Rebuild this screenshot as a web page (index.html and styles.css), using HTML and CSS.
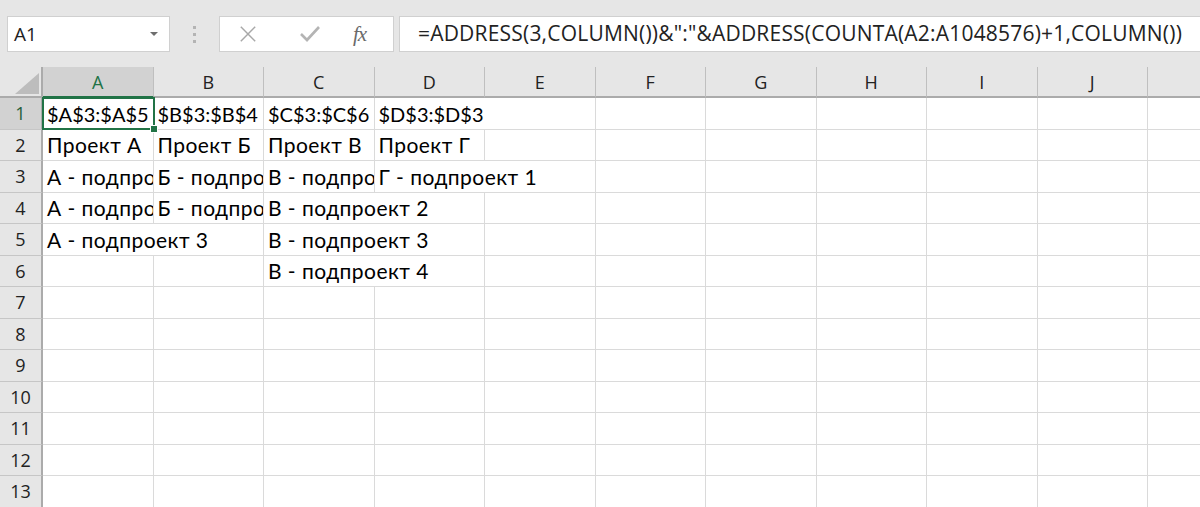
FILE: index.html
```html
<!DOCTYPE html>
<html>
    <head>
        <link rel="stylesheet" href="styles.css">
    </head>
    <body>
        <div class="toolbar">
            <div class="namebox">
                <span>A1</span>
                <i class="arrow"></i>
            </div>
            <div class="grip"><i></i><i></i><i></i></div>
            <div class="fxbox">
                <svg class="ico" width="20" height="20" viewBox="0 0 20 20">
                    <path d="M2 2 L18 18 M18 2 L2 18" stroke="#a8a8a8" stroke-width="1.6" fill="none"/>
                </svg>
                <svg class="ico" width="22" height="20" viewBox="0 0 22 20">
                    <path d="M2 10 L8 16 L20 3" stroke="#b4b4b4" stroke-width="2.6" fill="none"/>
                </svg>
                <span class="fx">fx</span>
            </div>
            <div class="formula">=ADDRESS(3,COLUMN())&amp;":"&amp;ADDRESS(COUNTA(A2:A1048576)+1,COLUMN())</div>
        </div>
        <div class="sheet">
            <table>
                <colgroup>
                    <col class="rh">
                    <col class="c"><col class="c"><col class="c"><col class="c"><col class="c"><col class="c">
                    <col class="c"><col class="c"><col class="c"><col class="c"><col class="c">
                </colgroup>
                <thead>
                    <tr>
                        <th class="corner"><i></i></th>
                        <th class="on">A</th><th>B</th><th>C</th><th>D</th><th>E</th><th>F</th>
                        <th>G</th><th>H</th><th>I</th><th>J</th><th></th>
                    </tr>
                </thead>
                <tbody>
                    <tr class="refs">
                        <th class="on">1</th>
                        <td class="sel">$A$3:$A$5</td><td>$B$3:$B$4</td><td>$C$3:$C$6</td><td colspan="2">$D$3:$D$3</td>
                        <td></td><td></td><td></td><td></td><td></td><td></td>
                    </tr>
                    <tr>
                        <th>2</th>
                        <td>Проект А</td><td>Проект Б</td><td>Проект В</td><td>Проект Г</td>
                        <td></td><td></td><td></td><td></td><td></td><td></td><td></td>
                    </tr>
                    <tr>
                        <th>3</th>
                        <td>А - подпроект 1</td><td>Б - подпроект 1</td><td>В - подпроект 1</td><td colspan="2">Г - подпроект 1</td>
                        <td></td><td></td><td></td><td></td><td></td><td></td>
                    </tr>
                    <tr>
                        <th>4</th>
                        <td>А - подпроект 2</td><td>Б - подпроект 2</td><td colspan="2">В - подпроект 2</td>
                        <td></td><td></td><td></td><td></td><td></td><td></td><td></td>
                    </tr>
                    <tr>
                        <th>5</th>
                        <td colspan="2">А - подпроект 3</td><td colspan="2">В - подпроект 3</td>
                        <td></td><td></td><td></td><td></td><td></td><td></td><td></td>
                    </tr>
                    <tr>
                        <th>6</th>
                        <td></td><td></td><td colspan="2">В - подпроект 4</td>
                        <td></td><td></td><td></td><td></td><td></td><td></td><td></td>
                    </tr>
                    <tr><th>7</th><td></td><td></td><td></td><td></td><td></td><td></td><td></td><td></td><td></td><td></td><td></td></tr>
                    <tr><th>8</th><td></td><td></td><td></td><td></td><td></td><td></td><td></td><td></td><td></td><td></td><td></td></tr>
                    <tr><th>9</th><td></td><td></td><td></td><td></td><td></td><td></td><td></td><td></td><td></td><td></td><td></td></tr>
                    <tr><th>10</th><td></td><td></td><td></td><td></td><td></td><td></td><td></td><td></td><td></td><td></td><td></td></tr>
                    <tr><th>11</th><td></td><td></td><td></td><td></td><td></td><td></td><td></td><td></td><td></td><td></td><td></td></tr>
                    <tr><th>12</th><td></td><td></td><td></td><td></td><td></td><td></td><td></td><td></td><td></td><td></td><td></td></tr>
                    <tr><th>13</th><td></td><td></td><td></td><td></td><td></td><td></td><td></td><td></td><td></td><td></td><td></td></tr>
                </tbody>
            </table>
        </div>
    </body>
</html>
```

FILE: styles.css
```css
body{
    margin:0;
    width:1200px;
    height:507px;
    overflow:hidden;
    background:#e6e6e6;
    font-family:"Open Sans", "Noto Sans", sans-serif;
}
.toolbar{
    height:67px;
    box-sizing:border-box;
    padding-top:16px;
    display:flex;
    align-items:flex-start;
}
.namebox{
    margin-left:7px;
    width:163px;
    height:36px;
    box-sizing:border-box;
    background:#fff;
    border:1px solid #d0d0d0;
    display:flex;
    align-items:center;
    justify-content:space-between;
    padding:0 11px 0 6px;
    font-size:19px;
    color:#222;
}
.namebox .arrow{
    width:0;
    height:0;
    border-left:4px solid transparent;
    border-right:4px solid transparent;
    border-top:4px solid #6e6e6e;
}
.grip{
    width:49px;
    height:36px;
    display:flex;
    flex-direction:column;
    align-items:center;
    justify-content:center;
    gap:4px;
}
.grip i{
    width:3px;
    height:3px;
    background:#b4b4b4;
}
.fxbox{
    width:175px;
    height:36px;
    box-sizing:border-box;
    background:#fff;
    border:1px solid #d0d0d0;
    display:flex;
    align-items:center;
    padding-left:19px;
}
.fxbox .ico:first-child{
    width:18px;
    height:18px;
}
.fxbox .ico + .ico{
    margin-left:42px;
}
.fx{
    margin-left:32px;
    font-family:"Liberation Serif", serif;
    font-style:italic;
    font-size:21px;
    color:#6a6a6a;
    letter-spacing:-1px;
}
.formula{
    margin-left:5px;
    flex:1;
    height:36px;
    box-sizing:border-box;
    background:#fff;
    border:1px solid #d0d0d0;
    border-right:none;
    padding-left:18px;
    font-size:21px;
    letter-spacing:0.2px;
    line-height:33px;
    white-space:nowrap;
    color:#222;
}
.sheet{
    overflow:hidden;
}
table{
    table-layout:fixed;
    border-collapse:separate;
    border-spacing:0;
    width:1258px;
}
col.rh{
    width:43px;
}
col.c{
    width:110.5px;
}
thead th{
    height:31px;
    box-sizing:border-box;
    background:#e6e6e6;
    border-right:1px solid #bfbfbf;
    border-bottom:2px solid #ababab;
    font-weight:normal;
    font-size:18px;
    color:#222;
    padding:0;
    text-align:center;
}
thead th.on{
    background:#d2d2d2;
    color:#217346;
    border-bottom-color:#217346;
}
th.corner{
    position:relative;
    border-right:2px solid #ababab;
}
th.corner i{
    position:absolute;
    right:2px;
    bottom:2px;
    width:24px;
    height:21px;
    background:#bdbdbd;
    clip-path:polygon(100% 0, 100% 100%, 0 100%);
}
tbody th{
    height:31.5px;
    box-sizing:border-box;
    background:#e6e6e6;
    border-right:2px solid #ababab;
    border-bottom:1px solid #c6c6c6;
    font-weight:normal;
    font-size:18px;
    color:#222;
    padding:0;
    text-align:center;
}
tbody th.on{
    background:#d2d2d2;
    color:#1e5e3c;
}
td{
    height:31.5px;
    box-sizing:border-box;
    background:#fff;
    border-right:1px solid #dadada;
    border-bottom:1px solid #dadada;
    padding:0 0 3px 4px;
    vertical-align:bottom;
    white-space:nowrap;
    overflow:hidden;
    font-family:Lato, "Open Sans", sans-serif;
    font-size:21px;
    letter-spacing:0.45px;
    line-height:24px;
    color:#000;
}
.refs td{
    font-size:20px;
    letter-spacing:0;
}
td.sel{
    position:relative;
    overflow:visible;
}
td.sel::after{
    content:"";
    position:absolute;
    left:-1px;
    top:-1px;
    right:-2px;
    bottom:-1px;
    border:2px solid #217346;
}
td.sel::before{
    content:"";
    position:absolute;
    right:-5px;
    bottom:-4px;
    width:6px;
    height:6px;
    background:#217346;
    border:1px solid #fff;
    z-index:1;
}
```
